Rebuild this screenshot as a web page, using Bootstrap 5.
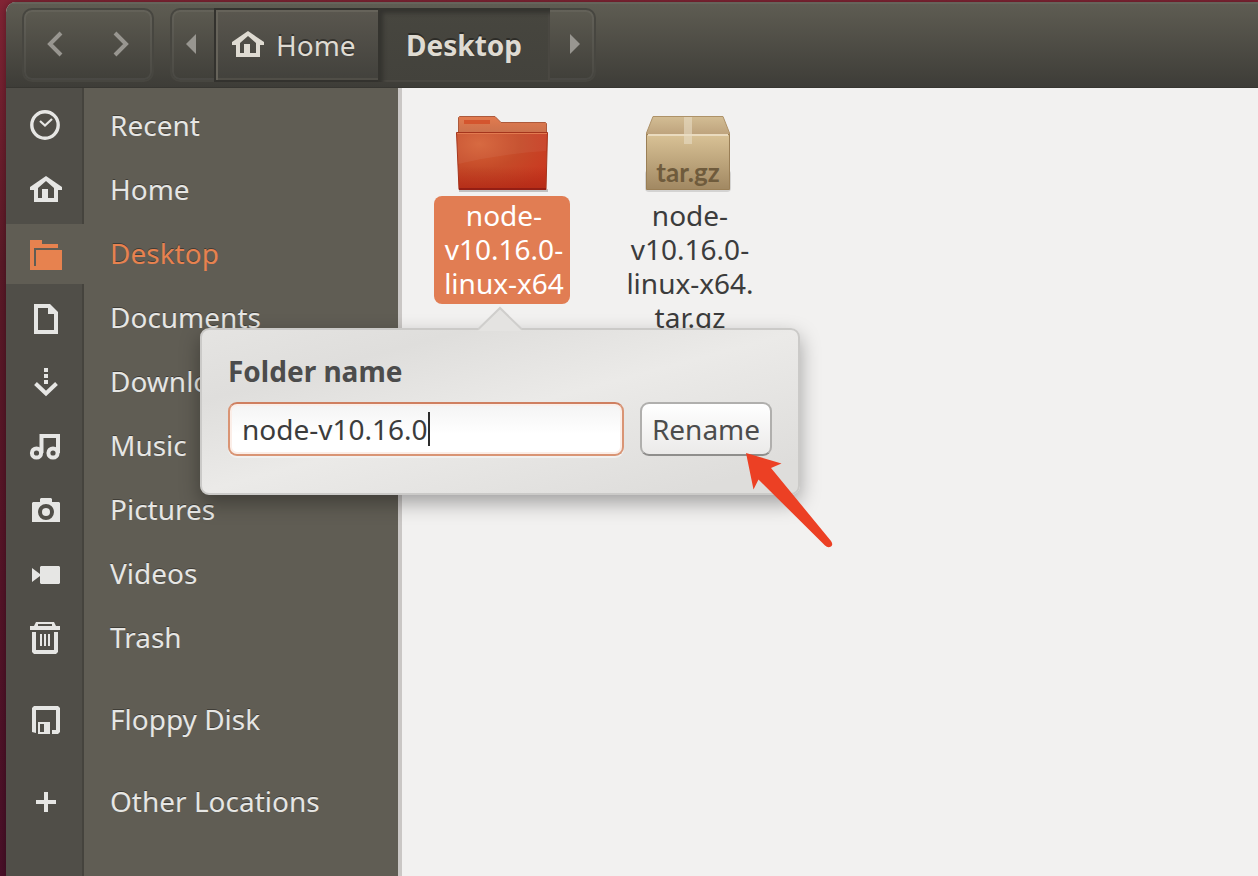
<!DOCTYPE html>
<html lang="en">
<head>
<meta charset="utf-8">
<meta name="viewport" content="width=device-width, initial-scale=1">
<title>Desktop</title>
<link href="https://cdn.jsdelivr.net/npm/bootstrap@5.3.0/dist/css/bootstrap.min.css" rel="stylesheet">
<style>
  body { font: 28px/34px "Noto Sans", "Open Sans", sans-serif; color: #3c3c3c; background: linear-gradient(#832535, #5c1a28 30%, #581528 60%, #4a1029); }
  .files-window { margin: 2px 0 0 6px; min-height: calc(100vh - 2px); border-top-left-radius: 10px; box-shadow: 0 0 8px rgba(0,0,0,.35); overflow: hidden; background: #f2f1f0; }
  .toolbar { height: 86px; padding: 6px 16px; gap: 16px; background: linear-gradient(#5f5d53, #3d3c37); box-shadow: inset 0 2px #66645b, inset 0 -1px #373631; }
  .tool-group { height: 74px; border: 2px solid #474640; border-radius: 10px; box-shadow: inset 0 0 0 2px rgba(255,255,255,.05); }
  .tool-group button { border: 0; background: none; color: #989690; padding: 0 0 2px; }
  .tool-group svg { display: block; }
  .nav-step { width: 64px; }
  .path-step { width: 42px; }
  .tool-group .step-left { padding-right: 4px; }
  .tool-group .step-right { width: 44px; padding-left: 6px; }
  .tool-group .path-home, .tool-group .path-current { color: #dfdbd2; text-shadow: 0 -2px rgba(0,0,0,.35); }
  .tool-group .path-home { width: 164px; gap: 10px; padding: 0 0 0 14px; margin: -2px 0; border: solid #33322e; border-width: 2px 0 2px 2px; background: linear-gradient(#5a574f, #42413c); box-shadow: inset 2px 2px #66635a, inset 0 -2px #504e47; }
  .tool-group .path-current { width: 172px; padding: 0 2px 2px 0; margin: -2px 0; border: solid #35342f; border-width: 2px 0 0 2px; background: linear-gradient(#47463f, #43423c); box-shadow: inset 3px 3px 4px #34332f, inset -2px -2px #4b4943; }
  .places { width: 396px; padding-top: 8px; border-right: 4px solid #cac7c5; background: linear-gradient(90deg, #504e48 0 76px, #45433d 76px 78px, #605d54 78px); }
  .place { height: 60px; margin-bottom: 4px; color: #e6e6e4; text-decoration: none; text-shadow: 0 -1px rgba(0,0,0,.35); }
  .place:hover { color: #fff; }
  .place.current { color: #e7824f; background: #605d54; }
  .place-icon { width: 82px; padding-left: 22px; }
  .place-name { padding: 0 0 2px 22px; }
  .place-break { margin-top: 22px; }
  .files { padding: 24px 32px; gap: 52px; }
  .file-item { width: 136px; text-align: center; }
  .file-item > svg { display: block; margin: 0 auto; }
  .file-label { margin-top: 4px; padding: 2px 0 4px; border-radius: 8px; }
  .file-label.selected { padding-left: 4px; background: #e17d53; color: #fff; }
  .rename-box { top: 100%; left: 50%; width: 600px; margin: 24px 0 0 -302px; padding: 24px 26px 37px; text-align: left; border: 2px solid #cbcac8; border-radius: 9px; z-index: 10; background: linear-gradient(165deg, #e5e4e2, #dfdedc 22%, #ebeae8 50%, #dedddb 90%); box-shadow: 0 8px 20px rgba(0,0,0,.34); color: #4c4c4c; }
  .rename-tip { left: 276px; top: -24px; }
  .rename-box label { font-weight: 700; }
  .rename-row { margin-top: 14px; gap: 16px; }
  .rename-input, .rename-input:focus { height: 54px; padding: 0 12px; font-size: 28px; color: #3c3c3c; border: 2px solid #d99474; border-top-color: #cf7f60; border-radius: 9px; background: linear-gradient(#f4f4f4, #fff 60%); box-shadow: inset 0 0 0 2px #fbeee8, 0 2px #f1f0ef; }
  .text-caret { left: 200px; top: 10px; width: 2px; height: 34px; background: #2c2c2c; }
  .rename-btn { width: 132px; height: 54px; padding: 0; font-size: 28px; line-height: 34px; color: #4c4c4c; border: 2px solid #b0afad; border-bottom-color: #8f8e8c; border-radius: 9px; background: linear-gradient(#fff, #ebeae9); }
  .pointer-arrow { left: 104px; top: 48px; z-index: 2; pointer-events: none; }
</style>
</head>
<body>
<div class="files-window d-flex flex-column">
  <header class="toolbar d-flex">
    <div class="tool-group d-flex">
      <button class="nav-step d-flex align-items-center justify-content-center" aria-label="Back"><svg width="20" height="28" viewBox="0 0 20 28"><path d="M15 3 4 14l11 11" fill="none" stroke="currentColor" stroke-width="4"/></svg></button>
      <button class="nav-step d-flex align-items-center justify-content-center" aria-label="Forward"><svg width="20" height="28" viewBox="0 0 20 28"><path d="m5 3 11 11L5 25" fill="none" stroke="currentColor" stroke-width="4"/></svg></button>
    </div>
    <nav class="tool-group d-flex" aria-label="Path">
      <button class="path-step step-left d-flex align-items-center justify-content-center" aria-label="Scroll left"><svg width="12" height="22" viewBox="0 0 12 22"><path d="M11 1v20L1 11z" fill="currentColor"/></svg></button>
      <button class="path-home d-flex align-items-center"><svg width="36" height="36" viewBox="0 0 36 36" fill="currentColor"><path d="M18 4 2 15v3h4v12h24V18h4v-3zm-8 12 8-7 8 7v10h-6v-9h-6v9h-4z" fill-rule="evenodd"/></svg>Home</button>
      <button class="path-current fw-bold">Desktop</button>
      <button class="path-step step-right d-flex align-items-center justify-content-center" aria-label="Scroll right"><svg width="12" height="22" viewBox="0 0 12 22"><path d="M1 1v20l10-10z" fill="currentColor"/></svg></button>
    </nav>
  </header>
  <div class="d-flex flex-grow-1">
    <nav class="places flex-shrink-0" aria-label="Places">
      <a href="#" class="place d-flex align-items-center"><span class="place-icon d-flex"><svg width="36" height="36" viewBox="0 0 36 36" fill="none" stroke="currentColor"><circle cx="17" cy="17" r="13.2" stroke-width="3.4"/><path d="m12 13 5 4.500 7-6.500" stroke-width="2.200"/></svg></span><span class="place-name">Recent</span></a>
      <a href="#" class="place d-flex align-items-center"><span class="place-icon d-flex"><svg width="36" height="36" viewBox="0 0 36 36" fill="currentColor"><path d="M18 4 2 15v3h4v12h24V18h4v-3zm-8 12 8-7 8 7v10h-6v-9h-6v9h-4z" fill-rule="evenodd"/></svg></span><span class="place-name">Home</span></a>
      <a href="#" class="place current d-flex align-items-center" aria-current="page"><span class="place-icon d-flex"><svg width="36" height="36" viewBox="0 0 36 36" fill="currentColor"><path d="M2 4H14V8H30V12H6V30H8V14H34V34H2z"/></svg></span><span class="place-name">Desktop</span></a>
      <a href="#" class="place d-flex align-items-center"><span class="place-icon d-flex"><svg width="36" height="36" viewBox="0 0 36 36" fill="currentColor"><path d="M6 4H22L30 12V34H6zM10 8V30H26V14H20V8z" fill-rule="evenodd"/></svg></span><span class="place-name">Documents</span></a>
      <a href="#" class="place d-flex align-items-center"><span class="place-icon d-flex"><svg width="36" height="36" viewBox="0 0 36 36" fill="currentColor"><path d="M16 4h4v4h-4zM16 10h4v4h-4zM16 16h4v4h-4z"/><path d="m7.500 19.500 10.500 10 10.500-10" fill="none" stroke="currentColor" stroke-width="4"/></svg></span><span class="place-name">Downloads</span></a>
      <a href="#" class="place d-flex align-items-center"><span class="place-icon d-flex"><svg width="36" height="36" viewBox="0 0 36 36" fill="none" stroke="currentColor" stroke-width="4"><circle cx="8.500" cy="25" r="4.600"/><circle cx="25" cy="25" r="4.600"/><path d="M13.500 25V8H30v17"/></svg></span><span class="place-name">Music</span></a>
      <a href="#" class="place d-flex align-items-center"><span class="place-icon d-flex"><svg width="36" height="36" viewBox="0 0 36 36" fill="currentColor"><path d="M12 10V7l1-1h10l1 1v3h7l1 1v19H4V11l1-1zM18 12a8 8 0 1 0 0 16 8 8 0 0 0 0-16z" fill-rule="evenodd"/><circle cx="18" cy="20" r="4"/></svg></span><span class="place-name">Pictures</span></a>
      <a href="#" class="place d-flex align-items-center"><span class="place-icon d-flex"><svg width="36" height="36" viewBox="0 0 36 36" fill="currentColor"><path d="M13 10h18l1 1v16l-1 1H13l-1-1v-7l-8 6V12l8 6v-7z"/></svg></span><span class="place-name">Videos</span></a>
      <a href="#" class="place d-flex align-items-center"><span class="place-icon d-flex"><svg width="36" height="36" viewBox="0 0 36 36" fill="currentColor"><path d="M6 6 8 2h18l2 4h4v4H2V6zm4 0h14V4H10z" fill-rule="evenodd"/><path d="M4 12h4v18h18V12h4v20l-2 2H6l-2-2zM12 14h2v12h-2zM16 14h2v12h-2zM20 14h2v12h-2z"/></svg></span><span class="place-name">Trash</span></a>
      <a href="#" class="place place-break d-flex align-items-center"><span class="place-icon d-flex"><svg width="36" height="36" viewBox="0 0 36 36" fill="currentColor"><path d="M6 4h24l2 2v24l-2 2h-6v-4h4V8H8v23l-4-1V6z"/><path d="M10 20h12v12H10zm2 2v8h4v-8z" fill-rule="evenodd"/></svg></span><span class="place-name">Floppy Disk</span></a>
      <a href="#" class="place place-break d-flex align-items-center"><span class="place-icon d-flex"><svg width="36" height="36" viewBox="0 0 36 36" fill="currentColor"><path d="M16 8h4v8h8v4h-8v8h-4v-8H8v-4h8z"/></svg></span><span class="place-name">Other Locations</span></a>
    </nav>
    <main class="files d-flex align-items-start flex-grow-1">
      <div class="file-item position-relative">
        <svg width="96" height="80" viewBox="452 112 96 80">
          <defs>
            <linearGradient id="folderBack" x2="0" y2="1"><stop stop-color="#e27b4f"/><stop offset="1" stop-color="#c9704c"/></linearGradient>
            <radialGradient id="folderFront" cx=".25" cy=".2" r=".9"><stop stop-color="#d56237"/><stop offset=".5" stop-color="#c54a28"/><stop offset="1" stop-color="#ca3820"/></radialGradient>
            <linearGradient id="folderShade" x2="0" y2="1"><stop offset=".6" stop-color="#a0200f" stop-opacity="0"/><stop offset="1" stop-color="#a0200f" stop-opacity=".5"/></linearGradient>
          </defs>
          <path d="M457 189h89v3h-89z" fill="#000" opacity=".2"/>
          <path d="M456.500 134v-16.500l1-1H493l6 6h44.500l1 1V134z" fill="url(#folderBack)" stroke="#ad5a3c"/>
          <path d="M462 120h26v4h-26z" fill="#d4552e"/>
          <path d="M454.500 132.500h91l-1.500 57h-87z" fill="url(#folderFront)" stroke="#a5351c"/>
          <path d="M455 133h90l-1 18q-46 3-88 13z" fill="#fff" opacity=".05"/>
          <path d="M455 133h90l-1.500 56H457z" fill="url(#folderShade)"/>
          <path d="M455 133.500h90" stroke="#e27a50"/><path d="M457 189h87" stroke="#941e14" stroke-width="2"/>
        </svg>
        <div class="file-label selected">node-<br>v10.16.0-<br>linux-x64</div>
        <form class="rename-box position-absolute" onsubmit="return false">
          <svg class="rename-tip position-absolute" width="44" height="25" viewBox="0 0 44 25"><path d="M0 25v-1L22 2l22 22v1z" fill="#e4e3e1"/><path d="M0 23.500 22 2l22 21.500" fill="none" stroke="#cfcecc" stroke-width="2"/></svg>
          <label for="folderName" class="d-block">Folder name</label>
          <div class="rename-row d-flex">
            <div class="position-relative flex-grow-1">
              <input id="folderName" class="rename-input form-control" type="text" value="node-v10.16.0" autocomplete="off" spellcheck="false">
              <span class="text-caret position-absolute"></span>
            </div>
            <div class="position-relative">
              <button class="rename-btn btn" type="submit">Rename</button>
              <svg class="pointer-arrow position-absolute" width="90" height="98" viewBox="744 450 90 98"><path d="M746 453 781.500 463.500 771 468 831 541Q833.500 544.500 831 546.500 828 548.500 825 545.500L758.500 479.500 753.500 489.500z" fill="#ec4024"/></svg>
            </div>
          </div>
        </form>
      </div>
      <div class="file-item">
        <svg width="96" height="80" viewBox="644 112 96 80">
          <defs>
            <linearGradient id="boxLid" x2="0" y2="1"><stop stop-color="#d3bd94"/><stop offset="1" stop-color="#bda27c"/></linearGradient>
            <linearGradient id="boxFront" x2="0" y2="1"><stop stop-color="#d9c296"/><stop offset="1" stop-color="#a18862"/></linearGradient>
          </defs>
          <rect x="647" y="170" width="86" height="22" rx="4" opacity=".12"/>
          <path d="M655 116.500h70l6.500 16.500v2h-83v-2z" fill="url(#boxLid)" stroke="#ae9268"/>
          <path d="M648.500 134.500h83v55h-83z" fill="url(#boxFront)" stroke="#9a7f56"/>
          <path d="M650 135h80" stroke="#eadbbf" stroke-width="2"/>
          <path d="M686 117h8v27h-8z" fill="#e8dcc4" opacity=".6"/>
          <text x="690" y="182" text-anchor="middle" font-family="Lato, sans-serif" font-weight="700" font-size="26" fill="#6f5b3c">tar.gz</text>
        </svg>
        <div class="file-label">node-<br>v10.16.0-<br>linux-x64.<br>tar.gz</div>
      </div>
    </main>
  </div>
</div>
<script src="https://cdn.jsdelivr.net/npm/bootstrap@5.3.0/dist/js/bootstrap.bundle.min.js"></script>
</body>
</html>
